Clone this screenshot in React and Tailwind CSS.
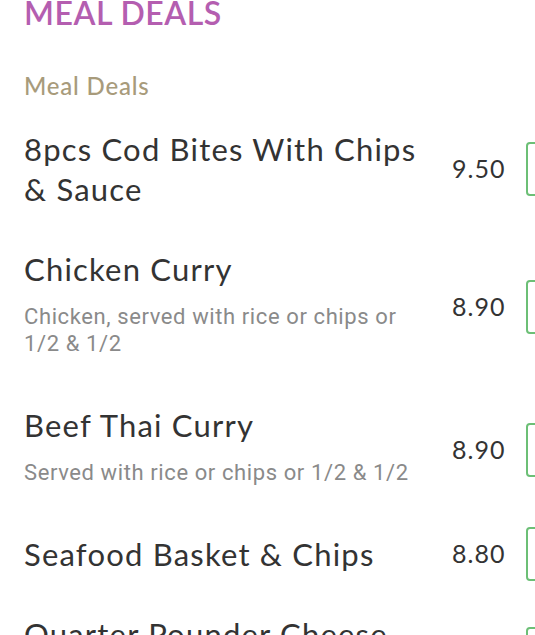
import React from "react";

const items = [
  { name: "8pcs Cod Bites With Chips & Sauce", price: "9.50" },
  { name: "Chicken Curry", desc: "Chicken, served with rice or chips or 1/2 & 1/2", price: "8.90" },
  { name: "Beef Thai Curry", desc: "Served with rice or chips or 1/2 & 1/2", price: "8.90" },
  { name: "Seafood Basket & Chips", price: "8.80" },
  { name: "Quarter Pounder Cheese Burger & Chips", price: "7.50" },
];

function MenuRow({ item }) {
  return (
    <div className="flex items-center py-5">
      <div className="w-[410px] shrink-0">
        <div className="text-[31px] leading-[40px] text-[#333] font-['Lato',sans-serif] tracking-[1.2px]">
          {item.name}
        </div>
        {item.desc && (
          <div className="mt-[14px] mb-2 text-[22px] leading-[27px] text-[#8a8a8a] font-['Roboto',sans-serif] tracking-[0.6px]">
            {item.desc}
          </div>
        )}
      </div>
      <div className="ml-[18px] w-[54px] shrink-0 text-[25px] text-[#333] font-['Lato',sans-serif] tracking-[1px]">
        {item.price}
      </div>
      {/* button overflows the row without growing it */}
      <div className="ml-5 -my-[7px] shrink-0 w-[80px] h-[54px] rounded-[4px] border-2 border-[#6cbf76]" />
    </div>
  );
}

export default function App() {
  return (
    <div className="w-[535px] h-[635px] overflow-hidden bg-white pl-6">
      <div className="-mt-[3px] text-[32px] leading-none font-semibold text-[#b45eb0] font-['Lato',sans-serif] tracking-[0.5px]">
        MEAL DEALS
      </div>
      <div className="mt-[45px] text-[24px] leading-none font-medium text-[#a89b7b] font-['Lato',sans-serif] tracking-[0.8px]">
        Meal Deals
      </div>
      <div className="mt-[11px]">
        {items.map((item) => (
          <MenuRow key={item.name} item={item} />
        ))}
      </div>
    </div>
  );
}
